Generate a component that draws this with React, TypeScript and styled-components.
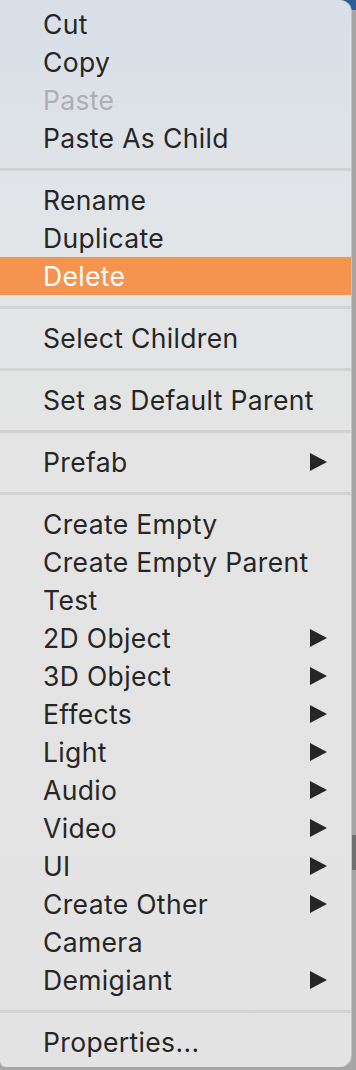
import React from 'react';
import styled, { createGlobalStyle } from 'styled-components';

const text = '#262626';
const disabled = '#afafaf';
const highlight = '#f5944e';
const rule = '#d3d3d3';

type Entry =
  | { label: string; submenu?: boolean; disabled?: boolean; active?: boolean }
  | 'separator';

const entries: Entry[] = [
  { label: 'Cut' },
  { label: 'Copy' },
  { label: 'Paste', disabled: true },
  { label: 'Paste As Child' },
  'separator',
  { label: 'Rename' },
  { label: 'Duplicate' },
  { label: 'Delete', active: true },
  'separator',
  { label: 'Select Children' },
  'separator',
  { label: 'Set as Default Parent' },
  'separator',
  { label: 'Prefab', submenu: true },
  'separator',
  { label: 'Create Empty' },
  { label: 'Create Empty Parent' },
  { label: 'Test' },
  { label: '2D Object', submenu: true },
  { label: '3D Object', submenu: true },
  { label: 'Effects', submenu: true },
  { label: 'Light', submenu: true },
  { label: 'Audio', submenu: true },
  { label: 'Video', submenu: true },
  { label: 'UI', submenu: true },
  { label: 'Create Other', submenu: true },
  { label: 'Camera' },
  { label: 'Demigiant', submenu: true },
  'separator',
  { label: 'Properties...' },
];

const GlobalStyle = createGlobalStyle`
  html, body {
    margin: 0;
    padding: 0;
  }
  body {
    width: 356px;
    height: 1070px;
    overflow: hidden;
    background: linear-gradient(to bottom, #2f5e97 0, #2f5e97 10px, #a6a6a6 10px, #a6a6a6 835px, #6f6f6f 835px, #6f6f6f 870px, #a6a6a6 870px);
    font-family: Inter, "Noto Sans", "Liberation Sans", sans-serif;
  }
`;

const Menu = styled.div`
  width: 352px;
  height: 1067px;
  box-sizing: border-box;
  padding: 5px 0 6px;
  border-right: 1px solid #c4c4c4;
  border-radius: 0 12px 12px 6px;
  background: linear-gradient(to bottom, #d8dfe7 0, #e1e4e8 200px, #e4e4e4 420px, #e3e3e3 100%);
  display: flex;
  flex-direction: column;
  overflow: hidden;
`;

const Item = styled.div<{ $active?: boolean; $disabled?: boolean }>`
  height: 38px;
  flex: none;
  display: flex;
  align-items: center;
  justify-content: space-between;
  padding: 0 24px 0 43px;
  font-size: 26.5px;
  letter-spacing: 0.35px;
  color: ${(p) => (p.$active ? '#ffffff' : p.$disabled ? disabled : text)};
  background: ${(p) => (p.$active ? highlight : 'transparent')};
`;

const Separator = styled.div`
  flex: none;
  height: 3px;
  margin: 11px 0 10px;
  background: ${rule};
`;

const Arrow = ({ color }: { color: string }) => (
  <svg width="17" height="18" viewBox="0 0 17 18">
    <polygon points="0,0 17,9 0,18" fill={color} />
  </svg>
);

export default function App() {
  return (
    <>
      <GlobalStyle />
      <Menu>
        {entries.map((e, i) =>
          e === 'separator' ? (
            <Separator key={i} />
          ) : (
            <Item key={i} $active={e.active} $disabled={e.disabled}>
              <span>{e.label}</span>
              {e.submenu && <Arrow color={e.active ? '#ffffff' : text} />}
            </Item>
          )
        )}
      </Menu>
    </>
  );
}
